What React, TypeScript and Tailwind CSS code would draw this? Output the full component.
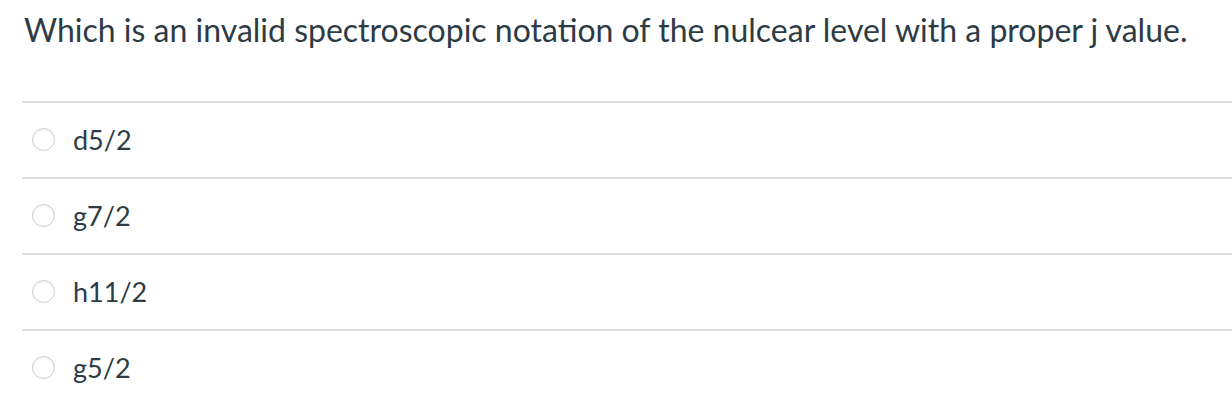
const options = ['d5/2', 'g7/2', 'h11/2', 'g5/2'];

export default function App() {
  return (
    <div className="h-[400px] w-[1232px] overflow-hidden bg-white text-[#2d3b45] font-['Lato',sans-serif]">
      {/* Question text */}
      <div className="px-6 pt-[11px] pb-[52px]">
        <p className="text-[32px] leading-[38px]">
          Which is an invalid spectroscopic notation of the nulcear level with a proper j value.
        </p>
      </div>

      {/* Answers */}
      <div className="ml-[22px]">
        {options.map((opt) => (
          <div
            key={opt}
            className="flex h-[76px] items-center border-t-2 border-[#dddddd] pb-[2px] pl-[10px]"
          >
            <span className="h-[23px] w-[23px] rounded-full border border-[#c7cdd1] bg-white shadow-[inset_0_1px_2px_rgba(0,0,0,0.08)]" />
            <span className="ml-[18px] text-[27px] leading-none">{opt}</span>
          </div>
        ))}
      </div>
    </div>
  );
}
